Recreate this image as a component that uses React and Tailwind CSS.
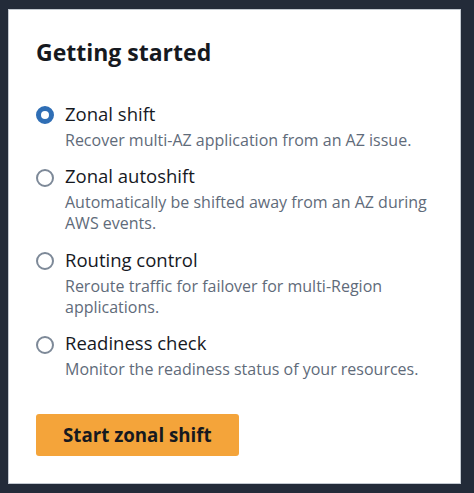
import React, { useState } from 'react';

const options = [
  { id: 'zonal-shift', label: 'Zonal shift', desc: 'Recover multi-AZ application from an AZ issue.' },
  { id: 'autoshift', label: 'Zonal autoshift', desc: 'Automatically be shifted away from an AZ during AWS events.' },
  { id: 'routing', label: 'Routing control', desc: 'Reroute traffic for failover for multi-Region applications.' },
  { id: 'readiness', label: 'Readiness check', desc: 'Monitor the readiness status of your resources.' },
];

export default function App() {
  const [selected, setSelected] = useState('zonal-shift');

  return (
    <div className="min-h-[493px] bg-[#232b39] pt-[9px] pl-[8px] pr-[13px] pb-[11px] font-['Open_Sans',sans-serif]">
      <div className="bg-white border border-[#c3c9d1] pl-[27px] pr-6 pt-[28px] pb-[27px]">
        <h2 className="text-[23px] leading-[28px] font-bold text-[#16191f]">Getting started</h2>

        <div className="mt-[34.5px] flex flex-col gap-[12.5px]">
          {options.map((o) => {
            const on = selected === o.id;
            return (
              <label key={o.id} className="flex items-start gap-[11px] cursor-pointer" onClick={() => setSelected(o.id)}>
                <span
                  className={`mt-[5.5px] w-[18px] h-[18px] shrink-0 rounded-full bg-white ${
                    on ? 'border-[5px] border-[#2f6eb5]' : 'border-2 border-[#7d8998]'
                  }`}
                />
                <span className="flex flex-col">
                  <span className="text-[18.5px] leading-[26px] text-[#16191f]">{o.label}</span>
                  <span className="mt-[3px] text-[16px] leading-[21px] text-[#5f6b7a]">{o.desc}</span>
                </span>
              </label>
            );
          })}
        </div>

        <button className="mt-[34px] h-[42px] px-[27px] rounded-[3px] bg-[#f4a43a] text-[18.7px] font-bold text-[#16191f]">
          Start zonal shift
        </button>
      </div>
    </div>
  );
}
